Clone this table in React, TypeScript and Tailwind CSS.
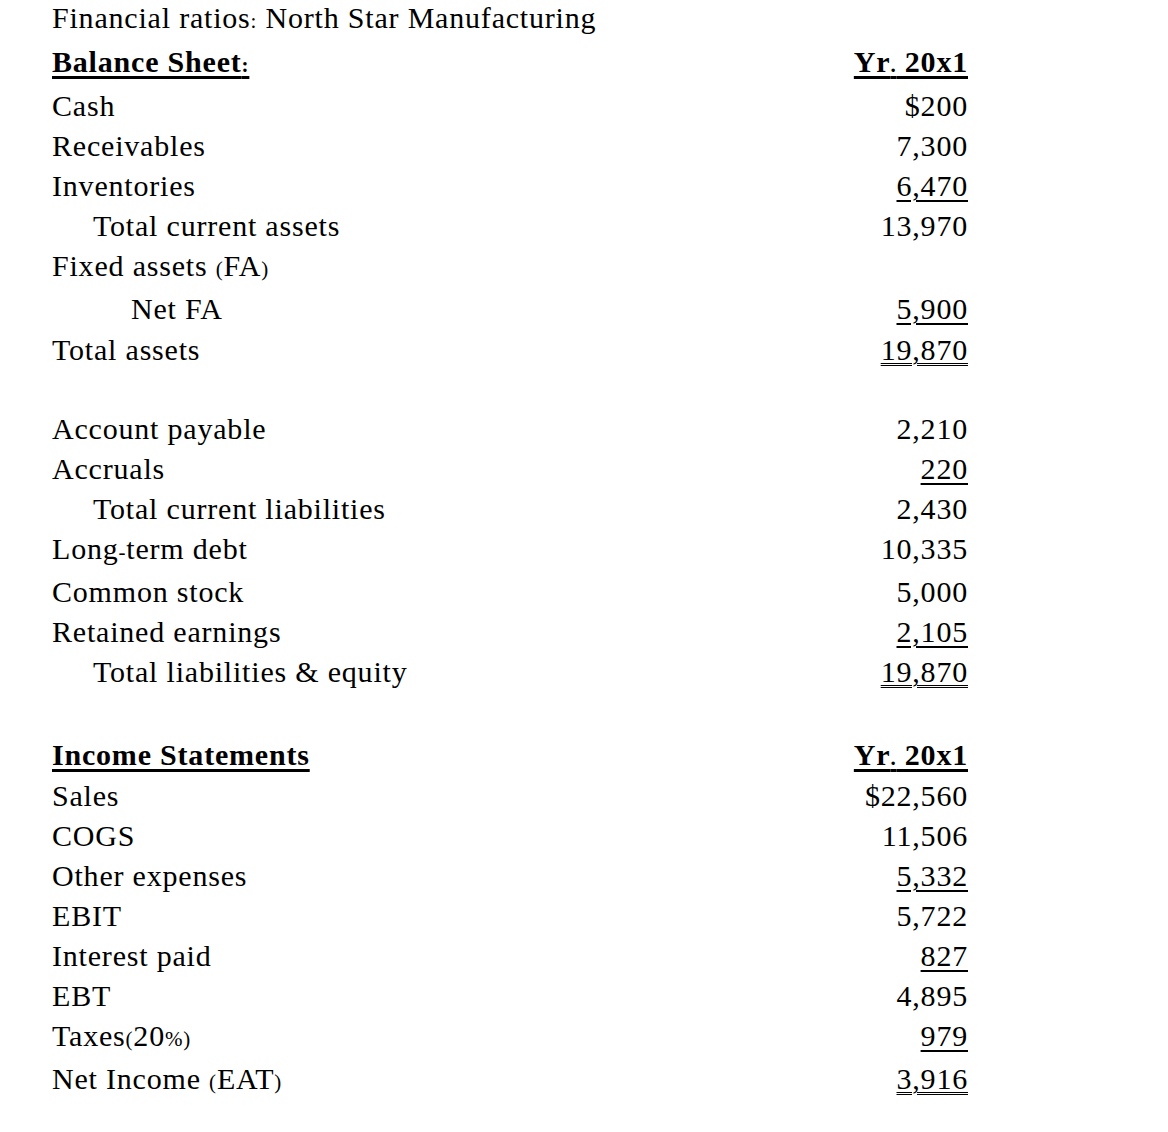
import React from "react";

const P = ({ children }: { children: React.ReactNode }) => (
  <span className="text-[21px]">{children}</span>
);

type RowProps = {
  label: React.ReactNode;
  value?: React.ReactNode;
  indent?: number;
  mt?: string;
  h?: string;
};

function Row({ label, value, indent = 0, mt = "", h = "h-[40px]" }: RowProps) {
  return (
    <div className={`flex items-center justify-between ${h} ${mt}`}>
      <div
        className={
          indent === 1 ? "pl-[41px]" : indent === 2 ? "pl-[79px]" : ""
        }
      >
        {label}
      </div>
      <div className="text-right -mr-[1px]">{value}</div>
    </div>
  );
}

const U = ({ children }: { children: React.ReactNode }) => (
  <span className="underline decoration-[1.5px] underline-offset-[4px]">{children}</span>
);
const UU = ({ children }: { children: React.ReactNode }) => (
  <span className="underline decoration-double decoration-[1px] underline-offset-[3px]">
    {children}
  </span>
);
const B = ({ children }: { children: React.ReactNode }) => (
  <span className="font-bold underline decoration-[3px] underline-offset-[4px]">
    {children}
  </span>
);

export default function App() {
  return (
    <div
      className="w-[1168px] h-[1132px] bg-white text-black text-[30px] leading-none tracking-[0.8px]"
      style={{ fontFamily: '"Liberation Serif", "Times New Roman", serif' }}
    >
      <div className="w-[967px] pl-[52px]">
        <Row
          h="h-[36px]"
          label={
            <>
              Financial ratios<P>:</P> North Star Manufacturing
            </>
          }
        />
        <Row
          mt="mt-[6px]"
          label={
            <B>
              Balance Sheet<P>:</P>
            </B>
          }
          value={
            <B>
              Yr<P>.</P> 20x1
            </B>
          }
        />
        <Row mt="mt-[4px]" label="Cash" value="$200" />
        <Row label="Receivables" value="7,300" />
        <Row label="Inventories" value={<U>6,470</U>} />
        <Row indent={1} label="Total current assets" value="13,970" />
        <Row
          label={
            <>
              Fixed assets <P>(</P>FA<P>)</P>
            </>
          }
        />
        <Row mt="mt-[3px]" indent={2} label="Net FA" value={<U>5,900</U>} />
        <Row mt="mt-[1px]" label="Total assets" value={<UU>19,870</UU>} />

        <Row mt="mt-[39px]" label="Account payable" value="2,210" />
        <Row label="Accruals" value={<U>220</U>} />
        <Row indent={1} label="Total current liabilities" value="2,430" />
        <Row
          label={
            <>
              Long<P>-</P>term debt
            </>
          }
          value="10,335"
        />
        <Row mt="mt-[3px]" label="Common stock" value="5,000" />
        <Row label="Retained earnings" value={<U>2,105</U>} />
        <Row indent={1} label="Total liabilities &amp; equity" value={<UU>19,870</UU>} />

        <Row
          mt="mt-[43px]"
          label={<B>Income Statements</B>}
          value={
            <B>
              Yr<P>.</P> 20x1
            </B>
          }
        />
        <Row mt="mt-[1px]" label="Sales" value="$22,560" />
        <Row label="COGS" value="11,506" />
        <Row label="Other expenses" value={<U>5,332</U>} />
        <Row label="EBIT" value="5,722" />
        <Row label="Interest paid" value={<U>827</U>} />
        <Row label="EBT" value="4,895" />
        <Row
          label={
            <>
              Taxes<P>(</P>20<P>%)</P>
            </>
          }
          value={<U>979</U>}
        />
        <Row
          mt="mt-[3px]"
          label={
            <>
              Net Income <P>(</P>EAT<P>)</P>
            </>
          }
          value={<UU>3,916</UU>}
        />
      </div>
    </div>
  );
}
